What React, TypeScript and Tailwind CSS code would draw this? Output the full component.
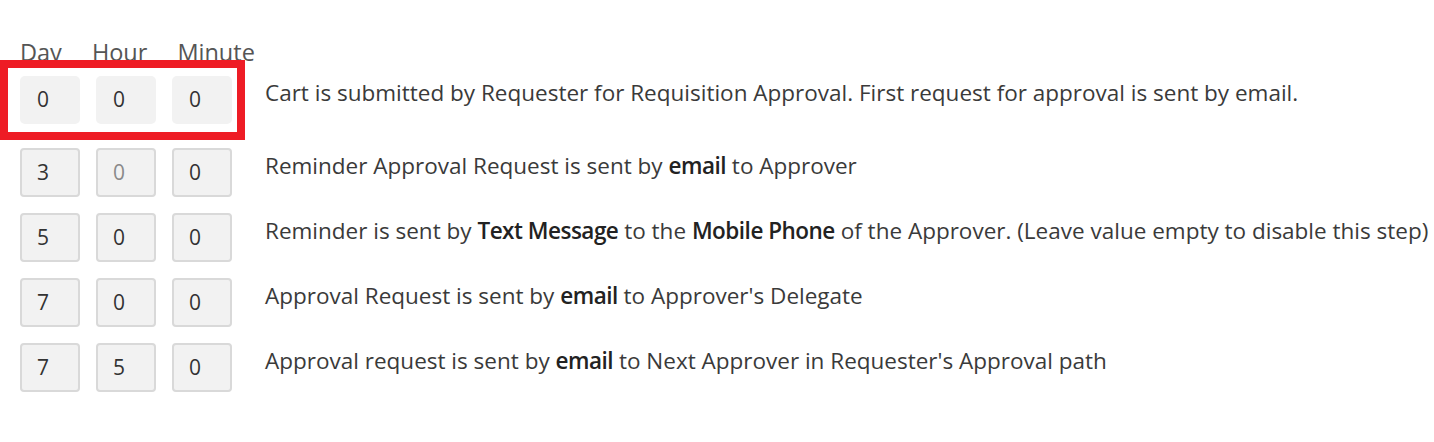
import React from "react";

type Step = {
  day: string;
  hour: string;
  minute: string;
  hourMuted?: boolean;
  plain?: boolean;
  text: React.ReactNode;
};

function Strong({ children }: { children: React.ReactNode }) {
  return <b className="font-semibold text-[#222] tracking-[-0.5px]">{children}</b>;
}

const steps: Step[] = [
  {
    day: "0",
    hour: "0",
    minute: "0",
    plain: true,
    text: "Cart is submitted by Requester for Requisition Approval. First request for approval is sent by email.",
  },
  {
    day: "3",
    hour: "0",
    minute: "0",
    hourMuted: true,
    text: (
      <>
        Reminder Approval Request is sent by <Strong>email</Strong> to Approver
      </>
    ),
  },
  {
    day: "5",
    hour: "0",
    minute: "0",
    text: (
      <>
        Reminder is sent by <Strong>Text Message</Strong> to the <Strong>Mobile Phone</Strong> of the Approver. (Leave
        value empty to disable this step)
      </>
    ),
  },
  {
    day: "7",
    hour: "0",
    minute: "0",
    text: (
      <>
        Approval Request is sent by <Strong>email</Strong> to Approver's Delegate
      </>
    ),
  },
  {
    day: "7",
    hour: "5",
    minute: "0",
    text: (
      <>
        Approval request is sent by <Strong>email</Strong> to Next Approver in Requester's Approval path
      </>
    ),
  },
];

function TimeBox({ value, muted, plain }: { value: string; muted?: boolean; plain?: boolean }) {
  return (
    <div
      className={
        plain
          ? "w-[60px] h-[48px] rounded-[5px] bg-[#f2f2f2] flex items-center pl-[17px] text-[21px] text-[#333]"
          : "w-[60px] h-[49px] rounded-[4px] bg-[#f2f2f2] border-2 border-[#d9d9d9] flex items-center pl-[15px] text-[21px] " +
            (muted ? "text-[#8a8a8a]" : "text-[#333]")
      }
    >
      {value}
    </div>
  );
}

export default function App() {
  return (
    <div
      className="relative w-[1434px] h-[442px] bg-white text-[#3a3a3a] overflow-hidden"
      style={{ fontFamily: '"Open Sans", "Noto Sans", sans-serif' }}
    >
      <div className="pt-[37px] pl-[20px]">
        <div className="flex gap-[30px] text-[23.5px] leading-[30px] text-[#555]">
          <span>Day</span>
          <span>Hour</span>
          <span>Minute</span>
        </div>

        <div className="mt-[9px] flex flex-col">
          {steps.map((s, i) => (
            <div key={i} className={"flex items-center " + (i === 1 ? "mt-[24px]" : i > 1 ? "mt-[16px]" : "")}>
              <div className="flex gap-[16px]">
                <TimeBox value={s.day} plain={s.plain} />
                <TimeBox value={s.hour} plain={s.plain} muted={s.hourMuted} />
                <TimeBox value={s.minute} plain={s.plain} />
              </div>
              <p className="ml-[33px] mb-[14px] text-[22.5px] whitespace-nowrap">{s.text}</p>
            </div>
          ))}
        </div>
      </div>

      {/* highlight frame around the first row */}
      <div className="absolute left-0 top-[60px] w-[245px] h-[80px] border-[8px] border-[#ee1c25]" />
    </div>
  );
}
